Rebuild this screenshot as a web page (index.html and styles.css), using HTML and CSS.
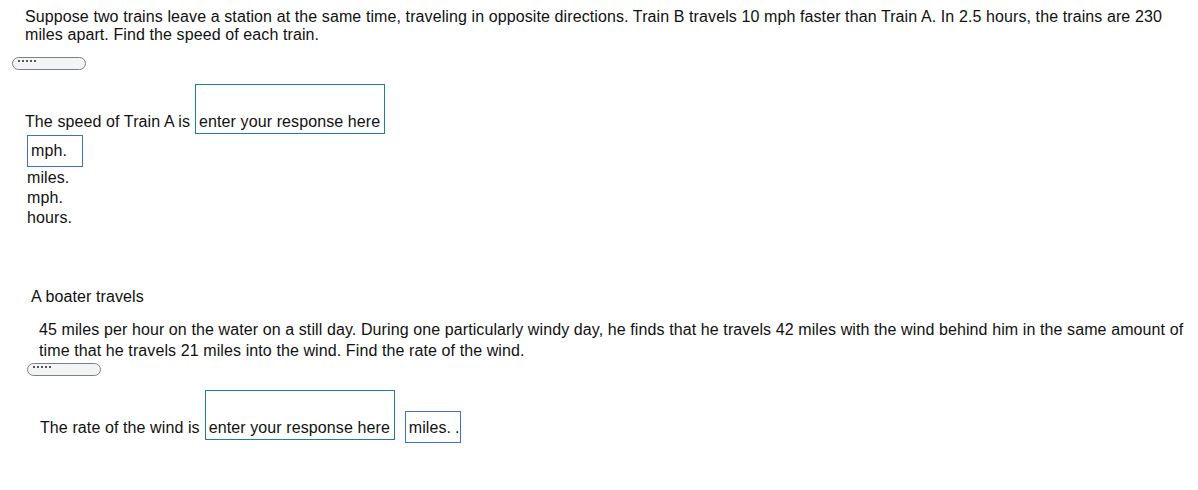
FILE: index.html
```html
<!DOCTYPE html>
<html>
<head>
<meta charset="utf-8">
<link rel="stylesheet" href="styles.css">
</head>
<body>
<div class="page">
  <section class="q1">
    <p class="prompt">Suppose two trains leave a station at the same time, traveling in opposite directions. Train B travels 10 mph faster than Train A. In 2.5 hours, the trains are 230 miles apart. Find the speed of each train.</p>
    <div class="pill pill-1"><span class="dots"><i></i><i></i><i></i><i></i><i></i></span></div>
    <div class="answer-line a1">
      <span class="lbl">The speed of Train A is</span>
      <span class="resp">enter your response here</span>
    </div>
    <div class="unit-box u1">mph.</div>
    <ul class="opts">
      <li>miles.</li>
      <li>mph.</li>
      <li>hours.</li>
    </ul>
  </section>
  <section class="q2">
    <p class="lead">A boater travels</p>
    <p class="prompt2">45 miles per hour on the water on a still day. During one particularly windy day, he finds that he travels 42 miles with the wind behind him in the same amount of time that he travels 21 miles into the wind. Find the rate of the wind.</p>
    <div class="pill pill-2"><span class="dots"><i></i><i></i><i></i><i></i><i></i></span></div>
    <div class="answer-line a2">
      <span class="lbl">The rate of the wind is</span>
      <span class="resp">enter your response here</span>
      <span class="unit-box u2">miles.<span class="dot">.</span></span>
    </div>
  </section>
</div>
</body>
</html>
```

FILE: styles.css
```css
html, body { margin: 0; padding: 0; background: #fff; }
body {
  font-family: "Liberation Sans", Arial, sans-serif;
  font-size: 16px;
  letter-spacing: 0.1px;
  color: #111;
}
.page { width: 1198px; }
p { margin: 0; }

.q1 { padding: 8px 0 0 25px; }
.prompt { line-height: 18px; width: 1155px; }

.pill {
  position: relative;
  width: 72px;
  height: 11px;
  border: 1px solid #7c7f84;
  border-radius: 7px;
  background: #f3f4f6;
}
.pill-1 { margin: 13px 0 0 -13px; }
.dots { display: flex; gap: 2px; padding: 2px 0 0 5px; }
.dots i { display: block; width: 2px; height: 2px; background: #555; }

.answer-line { display: flex; align-items: flex-end; }
.a1 { margin-top: 14px; }
.lbl { line-height: 18px; padding-bottom: 3px; white-space: nowrap; }
.resp {
  margin-left: 5px;
  border: 1px solid #1f7f9c;
  box-sizing: border-box;
  height: 50px;
  width: 190px;
  padding: 0 2px 2px 3px;
  display: flex;
  align-items: flex-end;
  line-height: 18px;
  white-space: nowrap;
  flex: none;
}
.unit-box {
  border: 1px solid #3b6fd1;
  box-sizing: border-box;
  line-height: 18px;
  white-space: nowrap;
}
.u1 {
  margin: 1px 0 0 2px;
  width: 56px;
  height: 32px;
  padding: 6px 0 0 3px;
}
.opts { list-style: none; margin: 1px 0 0 2px; padding: 0; }
.opts li { line-height: 20px; }

.q2 { padding: 60px 0 0 31px; }
.lead { line-height: 18px; }
.prompt2 { margin: 13px 0 0 8px; line-height: 21px; width: 1158px; }
.pill-2 { margin: 2px 0 0 -4px; }
.a2 { margin: 14px 0 0 9px; align-items: flex-start; }
.a2 .lbl { margin-top: 29px; padding: 0; }
.u2 {
  margin: 21px 0 0 10px;
  width: 56px;
  height: 32px;
  padding: 7px 0 0 3px;
  overflow: hidden;
}
.dot { margin-left: 4px; }
```
